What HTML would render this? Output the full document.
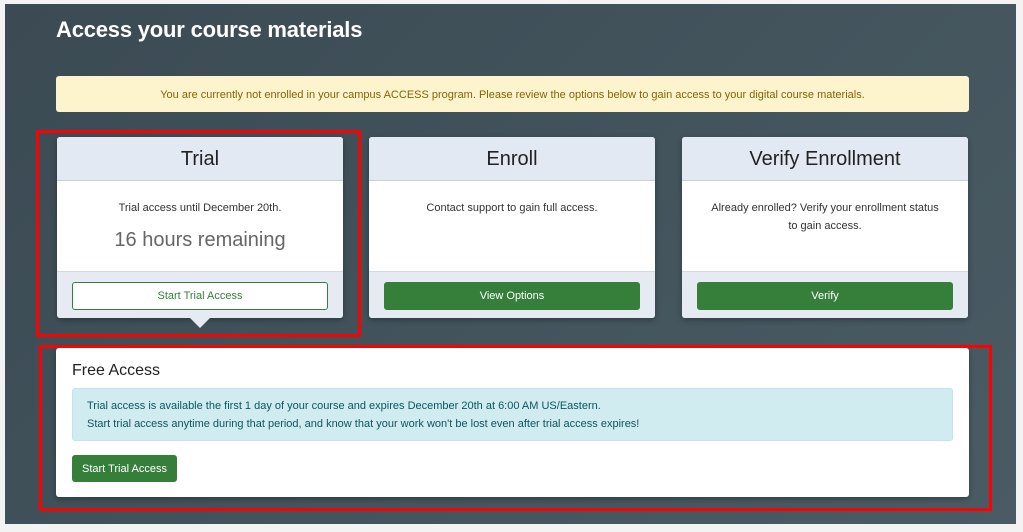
<!DOCTYPE html>
<html><head><style>
*{box-sizing:border-box;margin:0;padding:0}
body{width:1023px;height:532px;background:#f3f3f3;font-family:"Liberation Sans",sans-serif;position:relative;overflow:hidden}
.bg{position:absolute;left:5px;top:4px;width:1011px;height:520px;background:linear-gradient(135deg,#3b4a53,#44555e 60%,#4a5b64)}
.abs{position:absolute}
h1{position:absolute;left:56px;top:17px;color:#fff;font-size:22px;font-weight:bold;letter-spacing:-0.2px}
.alert{left:56px;top:76px;width:913px;height:36px;background:#fdf3cd;border-radius:3px;color:#856404;font-size:11px;text-align:center;line-height:38px}
.card{width:286px;height:181px;top:137px;background:#fff;border-radius:3px;overflow:hidden;box-shadow:0 2px 6px rgba(0,0,0,.3)}
.card .h{height:44px;background:#e3e9f3;border-bottom:1px solid #c9d0d8;text-align:center;font-size:20px;line-height:44px;color:#222}
.card .b{height:90px;text-align:center;font-size:11px;color:#333;padding-top:18px;line-height:18px}
.card .f{height:47px;background:#e6ebf3;border-top:1px solid #d2d8e0;padding:10px 15px 0}
.btn{height:28px;border-radius:3px;background:#367f3a;color:#fff;font-size:11px;text-align:center;line-height:28px}
.btn.o{background:#fff;border:1px solid #367f3a;color:#367f3a;line-height:26px}
.red{border:3px solid #f00}
.panel{left:56px;top:348px;width:913px;height:149px;background:#fff;border-radius:3px;box-shadow:0 2px 6px rgba(0,0,0,.3)}
</style></head><body>
<div class="bg"></div>
<h1>Access your course materials</h1>
<div class="abs alert">You are currently not enrolled in your campus ACCESS program. Please review the options below to gain access to your digital course materials.</div>
<div class="abs card" style="left:57px"><div class="h">Trial</div><div class="b">Trial access until December 20th.<div style="font-size:20px;color:#666;margin-top:14px">16 hours remaining</div></div><div class="f"><div class="btn o">Start Trial Access</div></div></div>
<div class="abs" style="left:190px;top:318px;width:0;height:0;border-left:10px solid transparent;border-right:10px solid transparent;border-top:10px solid #e6ebf3"></div>
<div class="abs card" style="left:369px"><div class="h">Enroll</div><div class="b">Contact support to gain full access.</div><div class="f"><div class="btn">View Options</div></div></div>
<div class="abs card" style="left:682px"><div class="h">Verify Enrollment</div><div class="b">Already enrolled? Verify your enrollment status<br>to gain access.</div><div class="f"><div class="btn">Verify</div></div></div>
<div class="abs red" style="left:36px;top:130px;width:325px;height:207px"></div>
<div class="abs panel">
<div class="abs" style="left:16px;top:14px;font-size:16px;color:#222">Free Access</div>
<div class="abs" style="left:16px;top:40px;width:881px;height:53px;background:#d1ecf1;border:1px solid #bee5eb;border-radius:3px;color:#0c5460;font-size:11px;line-height:18px;padding:8px 14px">Trial access is available the first 1 day of your course and expires December 20th at 6:00 AM US/Eastern.<br>Start trial access anytime during that period, and know that your work won't be lost even after trial access expires!</div>
<div class="abs btn" style="left:16px;top:107px;width:105px;height:27px;line-height:28px">Start Trial Access</div>
</div>
<div class="abs red" style="left:39px;top:345px;width:953px;height:166px"></div>
</body></html>
